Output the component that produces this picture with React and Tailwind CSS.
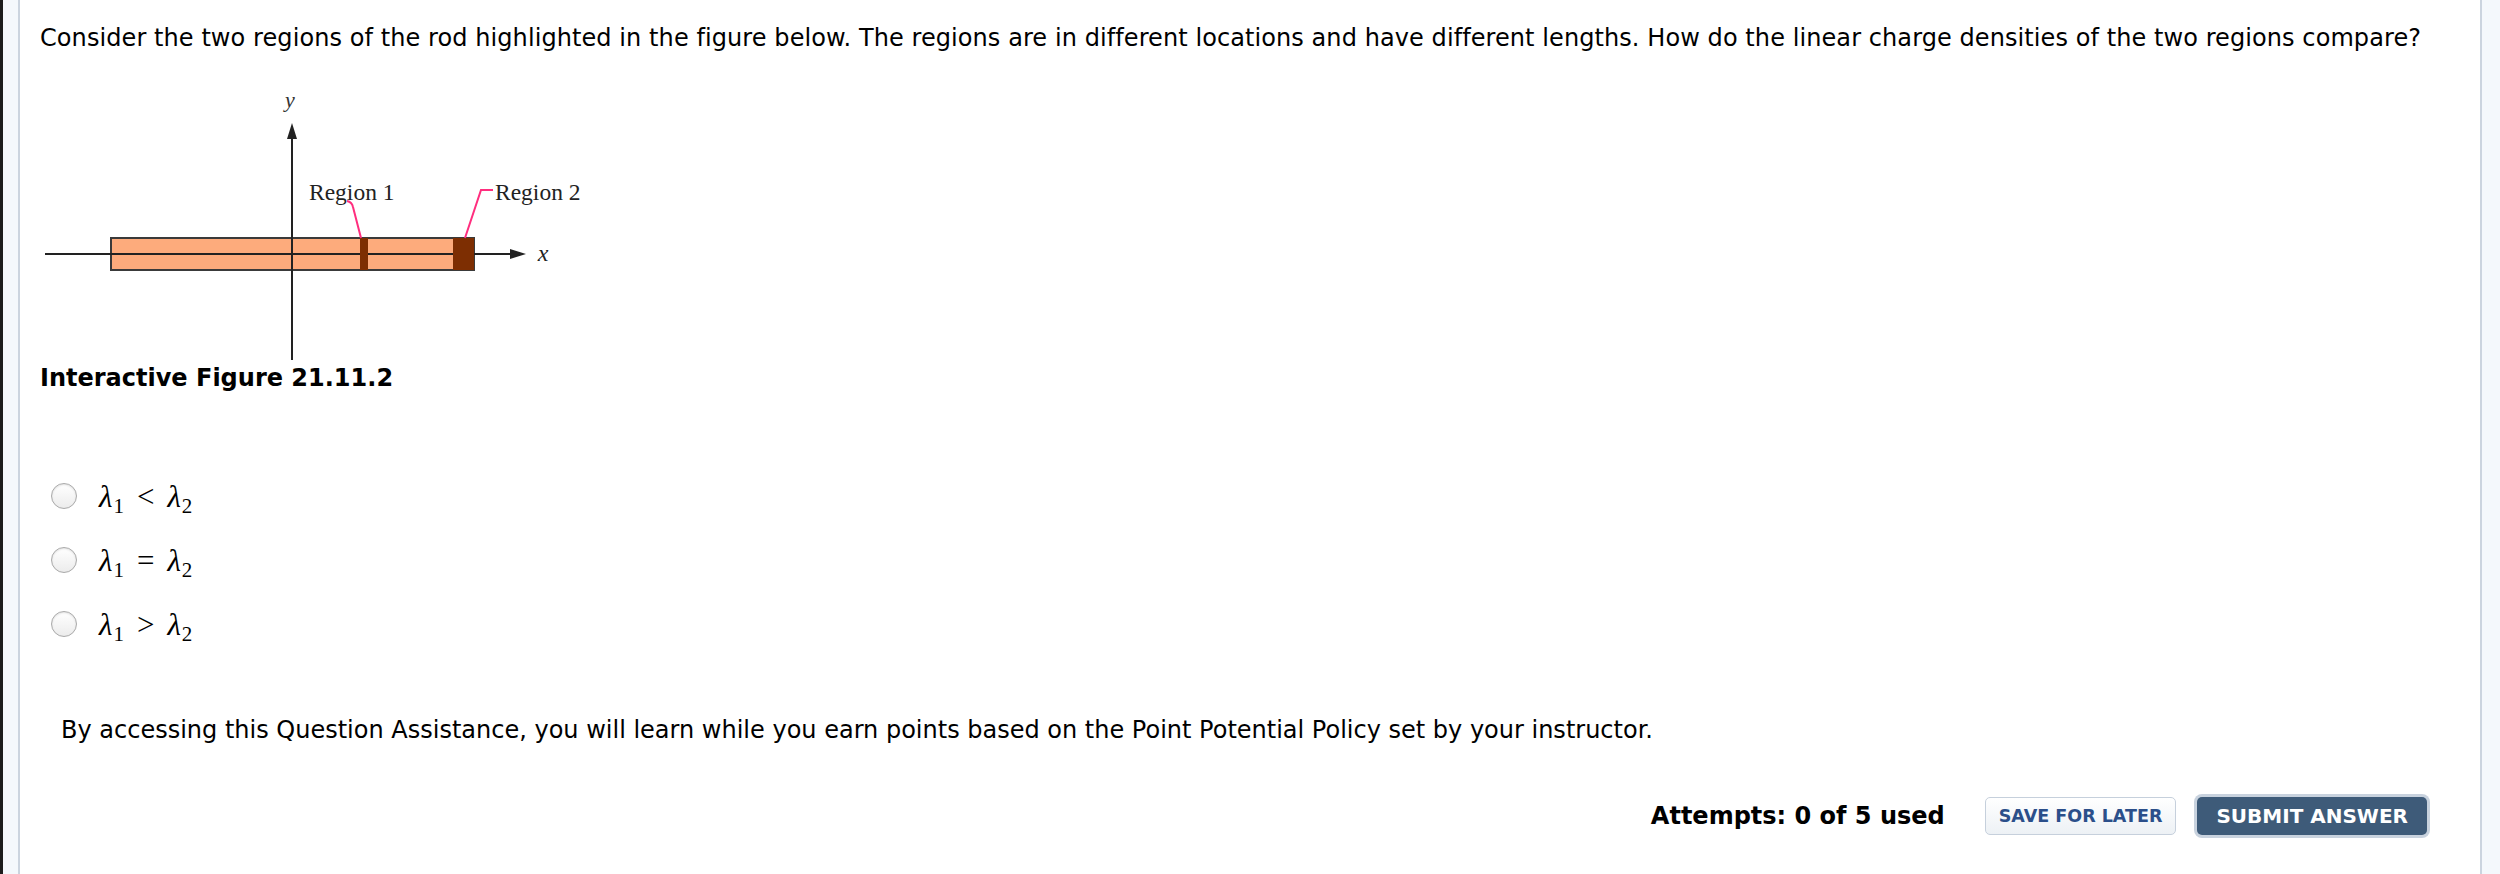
import React from 'react';

const sans = { fontFamily: '"DejaVu Sans", Verdana, sans-serif' };

function RodFigure() {
  // coordinates are page pixels, the viewBox is offset to the figure's spot
  return (
    <svg width="560" height="275" viewBox="40 85 560 275" className="block">
      <text x="290" y="107" textAnchor="middle" fontFamily="Liberation Serif, serif" fontStyle="italic" fontSize="22" fill="#333">y</text>
      <rect x="111" y="238" width="363" height="32" fill="#fdab7c" stroke="#3a3a3a" strokeWidth="2" />
      <line x1="292" y1="136" x2="292" y2="360" stroke="#222" strokeWidth="2" />
      <polygon points="292,123 287,139 297,139" fill="#222" />
      <line x1="45" y1="254" x2="512" y2="254" stroke="#222" strokeWidth="2" />
      <polygon points="526,254 510,249 510,259" fill="#222" />
      <rect x="360" y="238" width="8" height="32" fill="#7d2e02" />
      <rect x="453" y="238" width="21" height="32" fill="#7d2e02" />
      <path d="M347 201 Q352 202 353 207 L361 238" fill="none" stroke="#ff2e7e" strokeWidth="2" />
      <path d="M493 190 L481 190 L465 238" fill="none" stroke="#ff2e7e" strokeWidth="2" />
      <text x="309" y="200" fontFamily="Liberation Serif, serif" fontSize="23.5" fill="#222">Region 1</text>
      <text x="495" y="200" fontFamily="Liberation Serif, serif" fontSize="23.5" fill="#222">Region 2</text>
      <text x="543" y="261" textAnchor="middle" fontFamily="Liberation Serif, serif" fontStyle="italic" fontSize="24" fill="#222">x</text>
    </svg>
  );
}

function Lambda({ n }) {
  return (
    <span className="inline-flex items-baseline">
      <span className="italic">λ</span>
      <span className="text-[21px] relative top-[6px] ml-[1px]">{n}</span>
    </span>
  );
}

function Choice({ op }) {
  return (
    <label className="flex items-center h-[64px] pl-[11px] cursor-pointer">
      <span className="w-[26px] h-[26px] rounded-full border border-[#a9a9a9] bg-gradient-to-b from-white to-[#ececec] shadow-[inset_0_1px_2px_rgba(0,0,0,0.12)]" />
      <span
        className="ml-[22px] flex items-baseline text-[31px] text-black leading-none"
        style={{ fontFamily: '"Liberation Serif", "Times New Roman", serif' }}
      >
        <Lambda n="1" />
        <span className="mx-[13px]">{op}</span>
        <Lambda n="2" />
      </span>
    </label>
  );
}

export default function App() {
  return (
    <div className="h-[874px] bg-[#f4f8fc] border-l-[3px] border-[#1c1c1c] pl-[15px] pr-[18px] overflow-hidden" style={sans}>
      <div className="h-full bg-white border-x-2 border-[#cbd4df] pl-[20px] pr-[53px] pt-[20px] text-black">
        <p className="text-[24px] leading-[36px] whitespace-nowrap tracking-[0.08px]">
          Consider the two regions of the rod highlighted in the figure below. The regions are in different locations and have different lengths. How do the linear charge densities of the two regions compare?
        </p>

        <div className="mt-[29px]">
          <RodFigure />
        </div>

        <h3 className="text-[24px] leading-[36px] font-bold">Interactive Figure 21.11.2</h3>

        <div className="mt-[68px] flex flex-col">
          <Choice op="<" />
          <Choice op="=" />
          <Choice op=">" />
        </div>

        <p className="mt-[56px] ml-[21px] text-[24px] leading-[36px]">
          By accessing this Question Assistance, you will learn while you earn points based on the Point Potential Policy set by your instructor.
        </p>

        <div className="mt-[49px] flex items-center justify-end">
          <span className="text-[24px] font-bold mr-[40px]">Attempts: 0 of 5 used</span>
          <button className="h-[38px] px-[13px] rounded-[5px] border border-[#c6d0dc] bg-gradient-to-b from-white to-[#edf1f5] text-[#2b4f8a] text-[17.5px] font-bold">
            SAVE FOR LATER
          </button>
          <button className="ml-[21px] h-[38px] px-[19px] rounded-[5px] bg-[#3e5b79] ring-[3px] ring-[#c8d2de] text-white text-[20px] font-bold">
            SUBMIT ANSWER
          </button>
        </div>
      </div>
    </div>
  );
}
